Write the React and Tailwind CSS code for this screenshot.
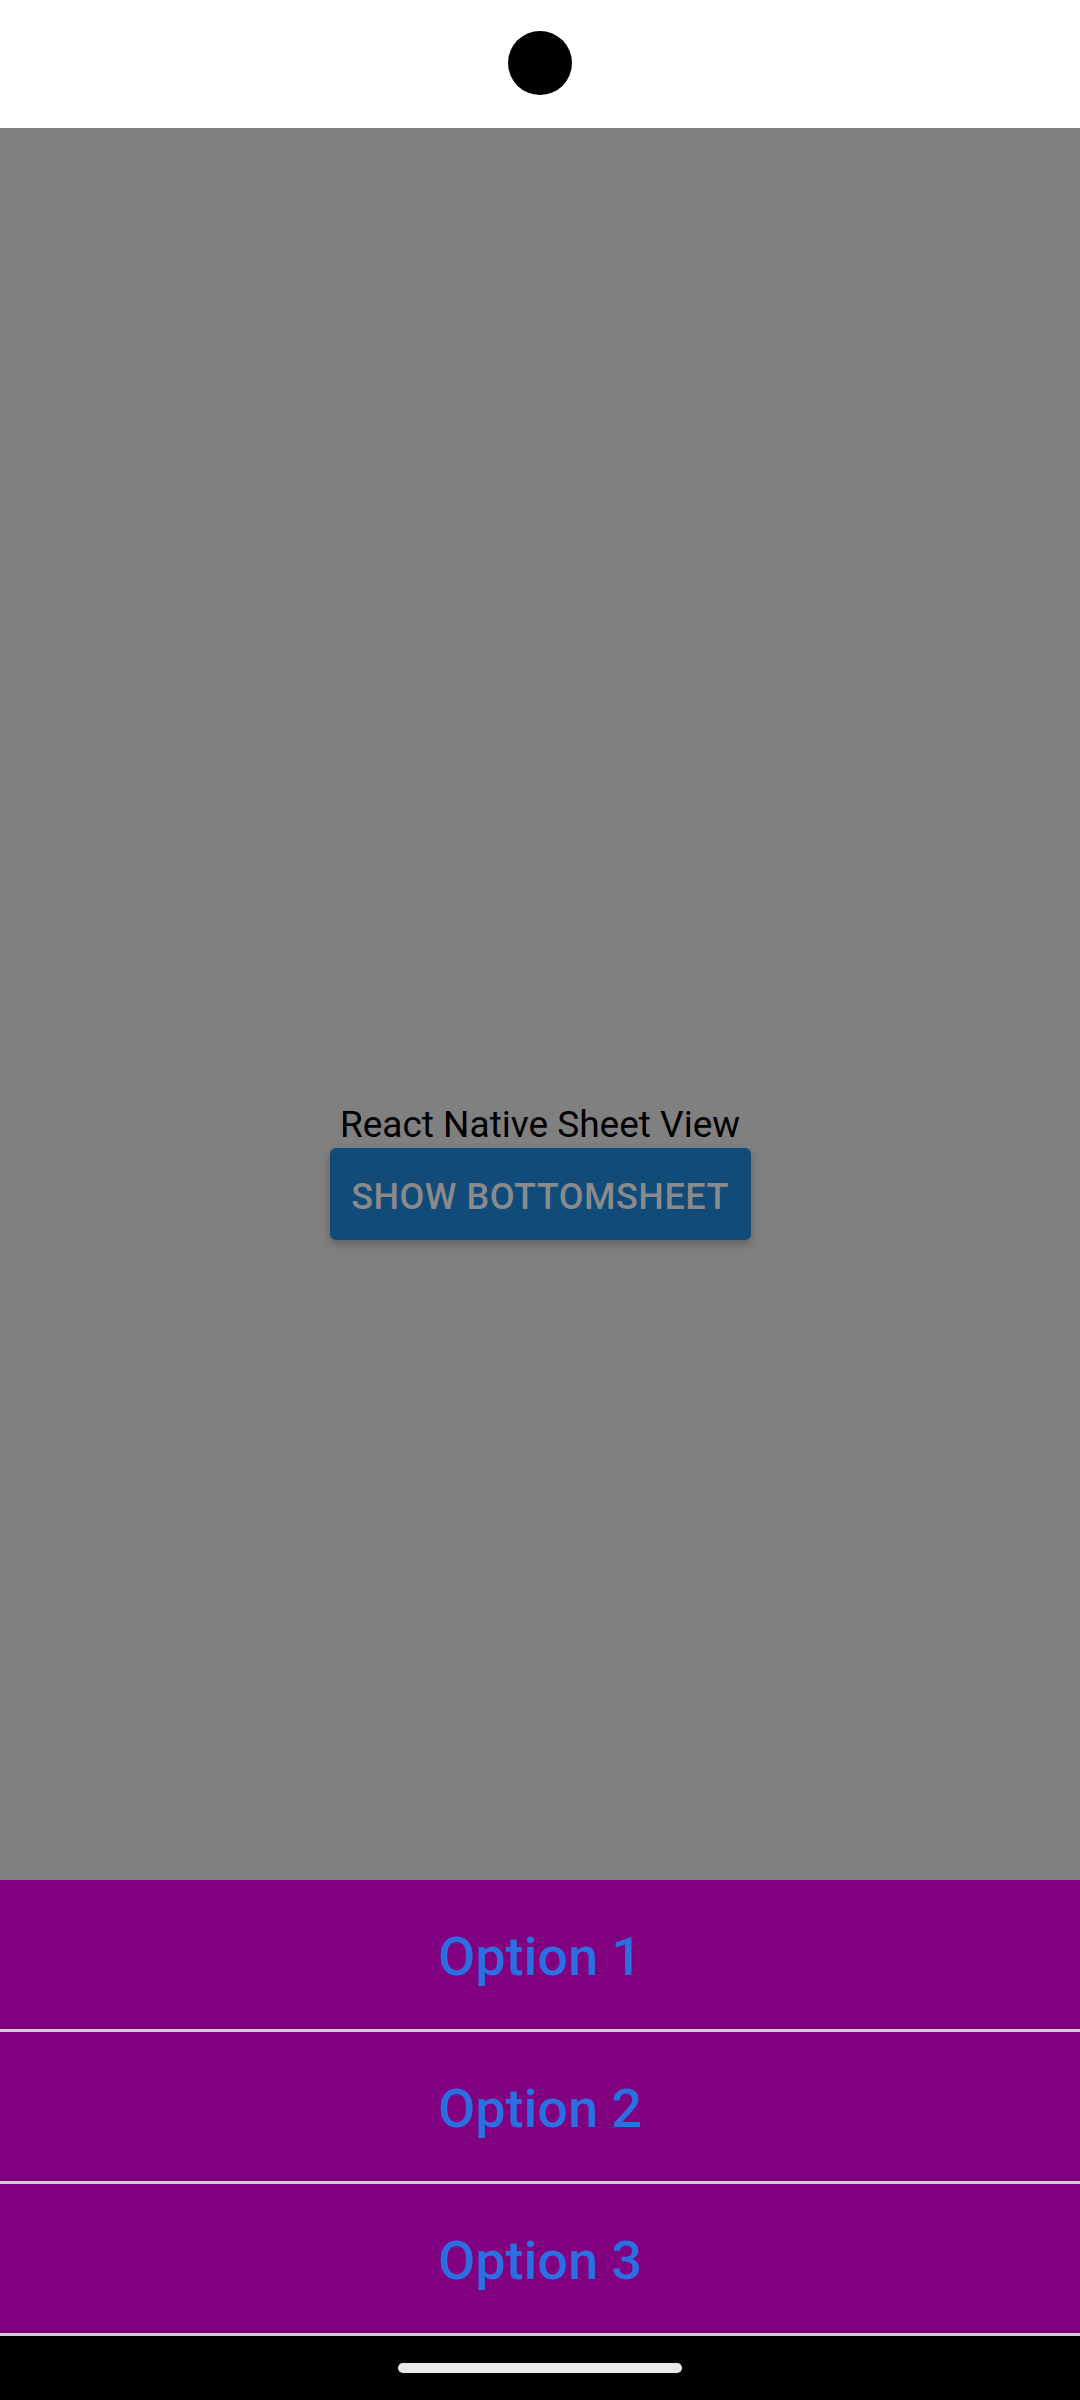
export default function App() {
  const options = ['Option 1', 'Option 2', 'Option 3']

  return (
    <div className="w-[1080px] h-[2400px] flex flex-col overflow-hidden" style={{ fontFamily: 'Roboto, "Noto Sans", sans-serif' }}>
      {/* status bar */}
      <div className="h-[128px] bg-white flex items-center justify-center shrink-0">
        <div className="w-[64px] h-[64px] rounded-full bg-black -mt-[2px]" />
      </div>

      {/* dimmed screen */}
      <div className="h-[1752px] bg-[#808080] flex flex-col items-center pt-[975px] shrink-0">
        <p className="text-[37px] leading-[43px] text-black">React Native Sheet View</p>
        <button className="mt-[2px] w-[421px] h-[92px] pt-[5px] rounded-[6px] bg-[#114b7a] text-[#8a8a8a] text-[36px] font-medium tracking-[0.5px] shadow-[0_4px_8px_rgba(0,0,0,0.25)]">
          SHOW BOTTOMSHEET
        </button>
      </div>

      {/* bottom sheet */}
      <div className="flex flex-col shrink-0">
        {options.map((o) => (
          <div key={o} className="h-[152px] pt-[4px] bg-[#800080] border-b-[3px] border-[#cfcfcf] flex items-center justify-center">
            <span className="text-[54px] font-medium text-[#2b6fe3] leading-none">{o}</span>
          </div>
        ))}
      </div>

      {/* nav bar */}
      <div className="flex-1 bg-black flex justify-center pt-[27px]">
        <div className="w-[284px] h-[10px] rounded-full bg-[#e8e8e8]" />
      </div>
    </div>
  )
}
